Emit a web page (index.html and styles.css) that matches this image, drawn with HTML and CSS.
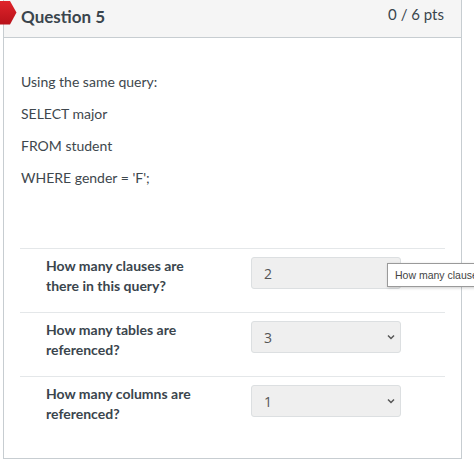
FILE: index.html
```html
<!DOCTYPE html>
<html lang="en">

<head>
    <meta charset="UTF-8">
    <meta name="viewport" content="width=device-width, initial-scale=1.0">
    <title>Question 5</title>
    <link rel="stylesheet" href="styles.css">
</head>

<body>
    <div class="question">
        <div class="header">
            <!-- 未作答标记 -->
            <svg class="flag" width="18" height="26" viewBox="0 0 18 26">
                <defs>
                    <linearGradient id="flagRed" x1="0" y1="0" x2="0" y2="1">
                        <stop offset="0" stop-color="#e0242b" />
                        <stop offset="1" stop-color="#b8121a" />
                    </linearGradient>
                </defs>
                <polygon points="0,1 10,1 16.5,12.5 10,24.5 0,24.5" fill="url(#flagRed)" />
            </svg>
            <h3 class="title">Question 5</h3>
            <span class="points">0 / 6 pts</span>
        </div>

        <div class="text">
            <p>Using the same query:</p>
            <p>SELECT major</p>
            <p>FROM student</p>
            <p>WHERE gender = 'F';</p>
        </div>

        <ul class="answers">
            <li class="answer">
                <div class="label">How many clauses are there in this query?</div>
                <div class="field">
                    <div class="box">2</div>
                    <div class="tooltip">How many clauses are there in this query?</div>
                </div>
            </li>
            <li class="answer">
                <div class="label">How many tables are referenced?</div>
                <div class="field">
                    <div class="box select">
                        <span>3</span>
                        <svg width="8" height="6" viewBox="0 0 8 6">
                            <polyline points="1,1.5 4,4.5 7,1.5" fill="none" stroke="#555" stroke-width="1.5" />
                        </svg>
                    </div>
                </div>
            </li>
            <li class="answer">
                <div class="label">How many columns are referenced?</div>
                <div class="field">
                    <div class="box select">
                        <span>1</span>
                        <svg width="8" height="6" viewBox="0 0 8 6">
                            <polyline points="1,1.5 4,4.5 7,1.5" fill="none" stroke="#555" stroke-width="1.5" />
                        </svg>
                    </div>
                </div>
            </li>
        </ul>
    </div>
</body>

</html>
```

FILE: styles.css
```css
* {
    margin: 0;
    padding: 0;
    box-sizing: border-box;
}

html,
body {
    overflow: hidden;
}

body {
    font-family: Lato, "Open Sans", sans-serif;
    color: #2d3b45;
    background: #fff;
}

ul {
    list-style: none;
}

.question {
    position: relative;
    width: 459px;
    height: 459px;
    margin-left: 3px;
    border: 1px solid #c7cdd1;
    border-top: none;
}

.header {
    display: flex;
    justify-content: space-between;
    align-items: flex-start;
    height: 38px;
    padding: 0 17px 0 17px;
    background: #f5f5f5;
    border-bottom: 1px solid #c7cdd1;
}

.flag {
    position: absolute;
    left: -4px;
    top: 0;
}

.title {
    padding-top: 6px;
    font-size: 17px;
    font-weight: 700;
    line-height: 22px;
    color: #3a454d;
}

.points {
    padding-top: 4px;
    font-size: 15px;
    line-height: 20px;
    color: #3a454d;
}

.text {
    padding: 22px 17px 0;
    font-size: 14px;
    line-height: 20px;
    color: #3e474d;
}

.text p {
    margin: 12px 0;
}

.answers {
    margin: 60px 16px 0;
}

.answer {
    display: flex;
    height: 64px;
    padding: 7px 0 0 26px;
    border-top: 1px solid #e4e7e9;
}

.label {
    width: 148px;
    font-size: 14px;
    font-weight: 700;
    line-height: 20px;
    color: #3a454d;
}

.field {
    position: relative;
    margin-left: 57px;
    padding-top: 1px;
}

.box {
    display: flex;
    justify-content: space-between;
    align-items: center;
    width: 150px;
    height: 32px;
    padding: 0 5px 0 12px;
    font-family: "Open Sans", sans-serif;
    font-size: 14px;
    color: #555;
    background: #efefef;
    border: 1px solid #dcdfe1;
    border-radius: 3px;
}

.tooltip {
    position: absolute;
    left: 136px;
    top: 7px;
    height: 24px;
    padding: 0 7px;
    font-family: "Liberation Sans", Arial, sans-serif;
    font-size: 10.5px;
    line-height: 22px;
    color: #444;
    white-space: nowrap;
    background: #fff;
    border: 1px solid #9a9a9a;
    box-shadow: 1px 1px 3px rgba(0, 0, 0, 0.2);
}
```
